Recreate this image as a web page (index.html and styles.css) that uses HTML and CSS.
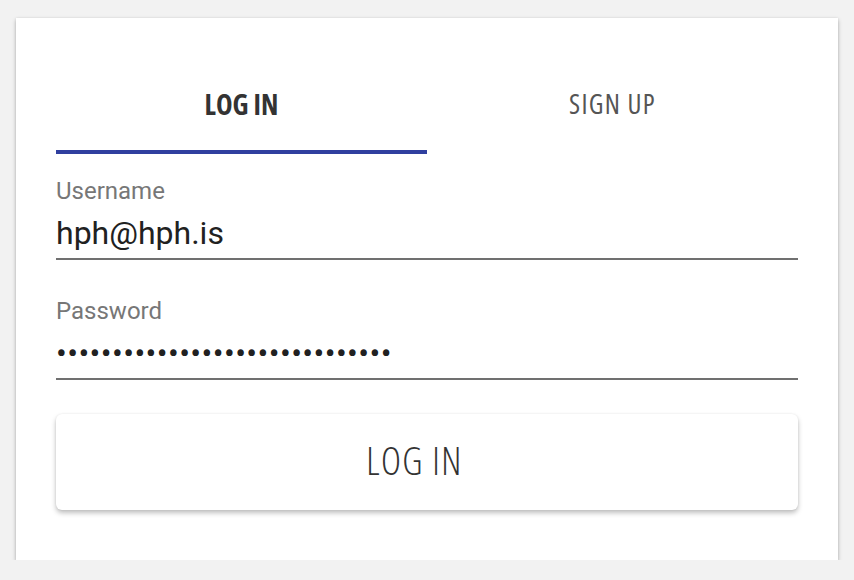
FILE: index.html
```html
<!DOCTYPE html>
<html lang="en">
<head>
<meta charset="utf-8">
<title>Log in</title>
<link rel="stylesheet" href="styles.css">
</head>
<body>
<div class="card">
  <div class="tabs">
    <div class="tab tab-active">LOG IN</div>
    <div class="tab">SIGN UP</div>
  </div>
  <form class="form">
    <label class="field">
      <span class="field-label">Username</span>
      <input class="field-input" type="text" value="hph@hph.is">
    </label>
    <label class="field field-second">
      <span class="field-label">Password</span>
      <input class="field-input field-password" type="password" value="123456789012345678901234567890">
    </label>
    <button class="submit" type="button">LOG IN</button>
  </form>
</div>
</body>
</html>
```

FILE: styles.css
```css
html, body {
  margin: 0;
  padding: 0;
  background: #f2f2f2;
}
body {
  padding: 18px 16px 0 16px;
  font-family: Roboto, "Liberation Sans", sans-serif;
}
.card {
  width: 822px;
  height: 542px;
  box-sizing: border-box;
  background: #fff;
  padding: 64px 40px 0 40px;
  box-shadow: 0 2px 4px rgba(0, 0, 0, 0.28), 0 0 2px rgba(0, 0, 0, 0.08);
}
.tabs {
  display: grid;
  grid-template-columns: 1fr 1fr;
  height: 72px;
}
.tab {
  display: flex;
  align-items: flex-start;
  justify-content: center;
  box-sizing: border-box;
  padding-top: 8px;
  font-family: "Open Sans", sans-serif;
  font-stretch: 75%;
  font-weight: 400;
  font-size: 27px;
  line-height: 28px;
  letter-spacing: 1.3px;
  color: #555;
}
.tab-active {
  font-weight: 700;
  font-size: 28px;
  letter-spacing: 0;
  color: #333;
  border-bottom: 4px solid #303f9f;
}
.form {
  display: flex;
  flex-direction: column;
  padding-top: 23px;
}
.field {
  display: flex;
  flex-direction: column;
}
.field-second {
  margin-top: 37px;
}
.field-label {
  font-size: 24px;
  line-height: 28px;
  color: #777;
}
.field-input {
  margin: 9px 0 0 0;
  padding: 0 0 6px 0;
  border: none;
  border-bottom: 2px solid #707070;
  outline: none;
  background: transparent;
  font-family: Roboto, "Liberation Sans", sans-serif;
  font-size: 32px;
  line-height: 38px;
  height: 38px;
  color: #212121;
}
.field-password {
  letter-spacing: 0.4px;
}
.submit {
  margin-top: 34px;
  height: 96px;
  padding: 0 25px 4px 0;
  border: none;
  border-radius: 6px;
  background: #fff;
  box-shadow: 0 3px 5px rgba(0, 0, 0, 0.25), 0 0 2px rgba(0, 0, 0, 0.08);
  font-family: "Open Sans", sans-serif;
  font-stretch: 75%;
  font-weight: 300;
  font-size: 38px;
  letter-spacing: 1.4px;
  color: #333;
  cursor: pointer;
}
```
